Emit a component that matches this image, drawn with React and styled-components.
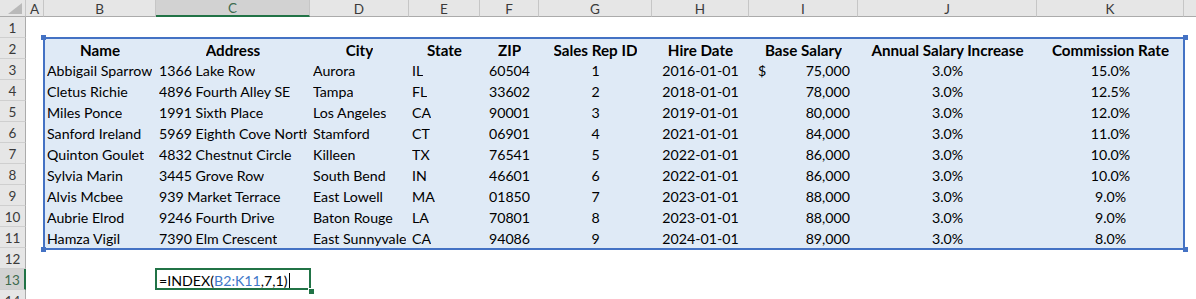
import React from "react";
import styled, { createGlobalStyle, css } from "styled-components";

const GlobalStyle = createGlobalStyle`
    body {
        margin: 0;
        background: #ffffff;
        font-family: Lato, "Liberation Sans", sans-serif;
        overflow: hidden;
    }
`;

const BLUE = "#4472C4";
const GREEN = "#217346";

const columns = [
    { key: "A", w: 18 },
    { key: "B", w: 112 },
    { key: "C", w: 154 },
    { key: "D", w: 99 },
    { key: "E", w: 71 },
    { key: "F", w: 59 },
    { key: "G", w: 113 },
    { key: "H", w: 97 },
    { key: "I", w: 109 },
    { key: "J", w: 179 },
    { key: "K", w: 147 },
    { key: "L", w: 40 },
];

// how each table column is aligned
const aligns = ["left", "left", "left", "left", "center", "center", "center", "money", "center", "center"];

const headers = ["Name", "Address", "City", "State", "ZIP", "Sales Rep ID", "Hire Date", "Base Salary", "Annual Salary Increase", "Commission Rate"];

const rows = [
    ["Abbigail Sparrow", "1366 Lake Row", "Aurora", "IL", "60504", "1", "2016-01-01", "75,000", "3.0%", "15.0%"],
    ["Cletus Richie", "4896 Fourth Alley SE", "Tampa", "FL", "33602", "2", "2018-01-01", "78,000", "3.0%", "12.5%"],
    ["Miles Ponce", "1991 Sixth Place", "Los Angeles", "CA", "90001", "3", "2019-01-01", "80,000", "3.0%", "12.0%"],
    ["Sanford Ireland", "5969 Eighth Cove North", "Stamford", "CT", "06901", "4", "2021-01-01", "84,000", "3.0%", "11.0%"],
    ["Quinton Goulet", "4832 Chestnut Circle", "Killeen", "TX", "76541", "5", "2022-01-01", "86,000", "3.0%", "10.0%"],
    ["Sylvia Marin", "3445 Grove Row", "South Bend", "IN", "46601", "6", "2022-01-01", "86,000", "3.0%", "10.0%"],
    ["Alvis Mcbee", "939 Market Terrace", "East Lowell", "MA", "01850", "7", "2023-01-01", "88,000", "3.0%", "9.0%"],
    ["Aubrie Elrod", "9246 Fourth Drive", "Baton Rouge", "LA", "70801", "8", "2023-01-01", "88,000", "3.0%", "9.0%"],
    ["Hamza Vigil", "7390 Elm Crescent", "East Sunnyvale", "CA", "94086", "9", "2024-01-01", "89,000", "3.0%", "8.0%"],
];

const Sheet = styled.div`
    display: flex;
    flex-direction: column;
    width: 1196px;
    height: 299px;
    overflow: hidden;
`;

const Row = styled.div`
    display: flex;
    height: ${(p) => p.$h}px;
    flex: none;
`;

const Corner = styled.div`
    width: 26px;
    flex: none;
    box-sizing: border-box;
    background: #e6e6e6;
    border-right: 1px solid #c6c6c6;
    border-bottom: 1px solid #ababab;
    position: relative;

    &::after {
        content: "";
        position: absolute;
        right: 3px;
        bottom: 2px;
        width: 14px;
        height: 11px;
        background: #b9b9b9;
        clip-path: polygon(100% 0, 100% 100%, 0 100%);
    }
`;

const ColHead = styled.div`
    width: ${(p) => p.$w}px;
    flex: none;
    box-sizing: border-box;
    background: #e6e6e6;
    border-right: 1px solid #c6c6c6;
    border-bottom: 1px solid #ababab;
    display: flex;
    align-items: center;
    justify-content: center;
    font-size: 13.5px;
    color: #3a3a3a;
    padding-top: 1px;
    ${(p) =>
        p.$active &&
        css`
            background: #d2d2d2;
            border-bottom: 2px solid ${GREEN};
            color: #3d6b4e;
        `}
`;

const RowHead = styled.div`
    width: 26px;
    flex: none;
    box-sizing: border-box;
    background: #e6e6e6;
    border-bottom: 1px solid #cfcfcf;
    border-right: 1px solid #ababab;
    display: flex;
    align-items: center;
    justify-content: center;
    font-size: 13.5px;
    color: #3a3a3a;
    padding-top: 2px;
    ${(p) =>
        p.$active &&
        css`
            background: #d2d2d2;
            border-right: 2px solid ${GREEN};
            color: #3d6b4e;
        `}
`;

const Cell = styled.div`
    width: ${(p) => p.$w}px;
    flex: none;
    box-sizing: border-box;
    position: relative;
    display: flex;
    align-items: flex-end;
    justify-content: ${(p) => (p.$align === "center" ? "center" : p.$align === "money" ? "space-between" : "flex-start")};
    padding: 0 ${(p) => (p.$align === "money" ? "8px 0 9px" : "3px 0 3px")};
    font-size: ${(p) => (p.$bold ? "15.2px" : "14.2px")};
    line-height: 18px;
    color: #000;
    font-weight: ${(p) => (p.$bold ? 700 : 400)};
    white-space: nowrap;
    background: ${(p) => (p.$fill ? "#dfeaf6" : "transparent")};

    ${(p) =>
        p.$edge &&
        css`
            &::after {
                content: "";
                position: absolute;
                pointer-events: none;
                top: -1px;
                bottom: -2px;
                left: -1px;
                right: -1px;
                border-style: solid;
                border-color: ${BLUE};
                border-width: ${p.$edge.t ? 2 : 0}px ${p.$edge.r ? 2 : 0}px ${p.$edge.b ? 2 : 0}px ${p.$edge.l ? 2 : 0}px;
                ${!p.$edge.t && "top: 0;"}
                ${!p.$edge.b && "bottom: 0;"}
                ${!p.$edge.l && "left: 0;"}
                ${!p.$edge.r && "right: 0;"}
            }
        `}
`;

// text clipped at the cell's right edge, as Excel does when the next cell is not empty
const Text = styled.span`
    display: block;
    max-width: 100%;
    overflow-x: clip;
    overflow-y: visible;
    position: relative;
    z-index: 1;
`;

const Handle = styled.span`
    position: absolute;
    width: 5px;
    height: 5px;
    background: ${(p) => p.$color};
    z-index: 2;
    ${(p) => (p.$top ? "top: -3px;" : "bottom: -4px;")}
    ${(p) => (p.$left ? "left: -3px;" : "right: -4px;")}
    ${(p) => p.$ring && "outline: 1px solid #fff;"}
`;

const ActiveCell = styled(Cell)`
    &::before {
        content: "";
        position: absolute;
        top: -1px;
        left: -1px;
        right: -1px;
        bottom: 0;
        border: 2px solid ${GREEN};
        pointer-events: none;
    }
`;

const Ref = styled.span`
    color: #3f78c8;
`;

const Caret = styled.span`
    display: inline-block;
    width: 1px;
    height: 16px;
    background: #000;
    margin: 0 0 1px 1px;
`;

const Money = ({ value, dollar }) => (
    <>
        <Text>{dollar ? "$" : ""}</Text>
        <Text>{value}</Text>
    </>
);

const rangeEdge = (rowIdx, colIdx) => {
    // rowIdx 0..9 within B2:K11, colIdx 0..9
    const e = { t: rowIdx === 0, b: rowIdx === 9, l: colIdx === 0, r: colIdx === 9 };
    return e.t || e.b || e.l || e.r ? e : null;
};

const TableRow = ({ num, values, bold }) => {
    const rowIdx = num - 2;
    return (
        <Row $h={21}>
            <RowHead>{num}</RowHead>
            <Cell $w={columns[0].w} />
            {values.map((v, i) => {
                const edge = rangeEdge(rowIdx, i);
                const align = bold ? "center" : aligns[i];
                const isTop = rowIdx === 0;
                const isBottom = rowIdx === 9;
                return (
                    <Cell key={i} $w={columns[i + 1].w} $fill $bold={bold} $align={align} $edge={edge}>
                        {align === "money" ? <Money value={v} dollar={num === 3} /> : <Text>{v}</Text>}
                        {i === 0 && (isTop || isBottom) && <Handle $color={BLUE} $top={isTop} $left />}
                        {i === 9 && (isTop || isBottom) && <Handle $color={BLUE} $top={isTop} />}
                    </Cell>
                );
            })}
            <Cell $w={columns[11].w} />
        </Row>
    );
};

const EmptyRow = ({ num }) => (
    <Row $h={21}>
        <RowHead>{num}</RowHead>
        {columns.map((c) => (
            <Cell key={c.key} $w={c.w} />
        ))}
    </Row>
);

const App = () => (
    <>
        <GlobalStyle />
        <Sheet>
            <Row $h={17}>
                <Corner />
                {columns.map((c) => (
                    <ColHead key={c.key} $w={c.w} $active={c.key === "C"}>
                        {c.key}
                    </ColHead>
                ))}
            </Row>
            <EmptyRow num={1} />
            <TableRow num={2} values={headers} bold />
            {rows.map((r, i) => (
                <TableRow key={i} num={i + 3} values={r} />
            ))}
            <EmptyRow num={12} />
            <Row $h={21}>
                <RowHead $active>13</RowHead>
                <Cell $w={columns[0].w} />
                <Cell $w={columns[1].w} />
                <ActiveCell $w={columns[2].w}>
                    <Text>
                        =INDEX(<Ref>B2:K11</Ref>,7,1)
                    </Text>
                    <Caret />
                    <Handle $color={GREEN} $ring />
                </ActiveCell>
                {columns.slice(3).map((c) => (
                    <Cell key={c.key} $w={c.w} />
                ))}
            </Row>
            <EmptyRow num={14} />
        </Sheet>
    </>
);

export default App;
